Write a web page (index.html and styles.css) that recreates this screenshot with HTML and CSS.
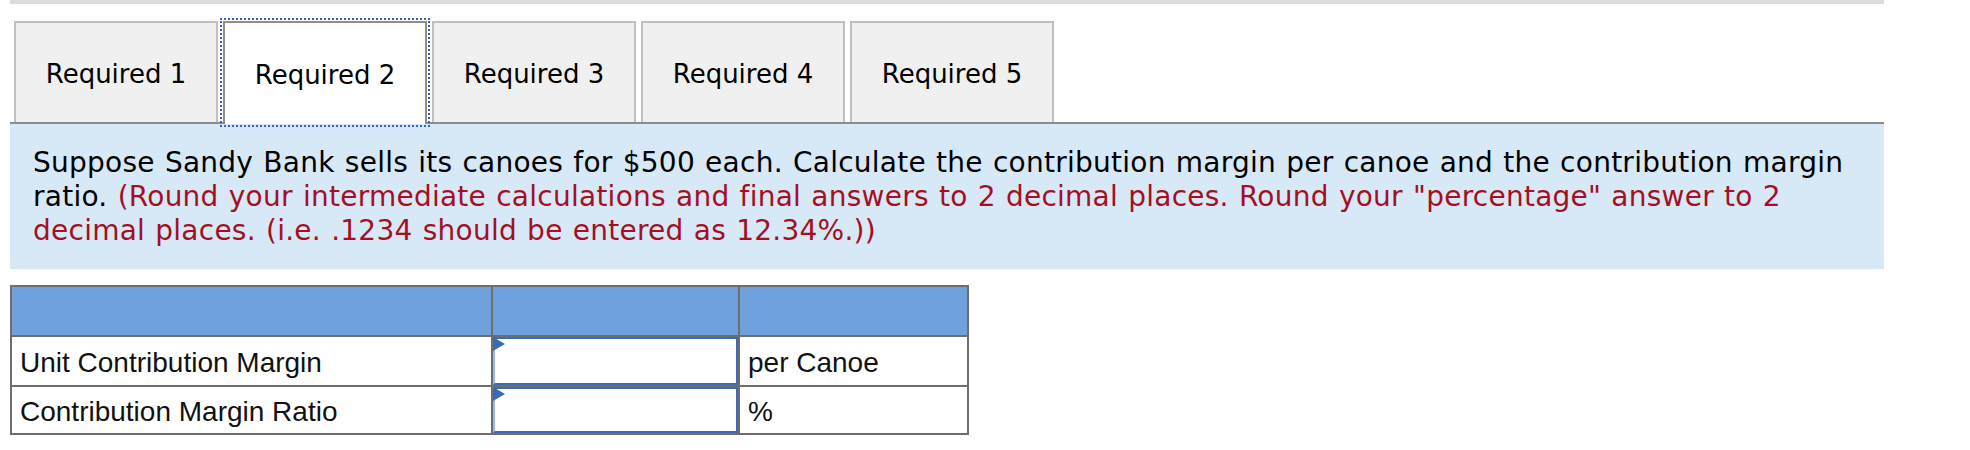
FILE: index.html
```html
<!DOCTYPE html>
<html>
<head>
<meta charset="utf-8">
<link rel="stylesheet" href="styles.css">
</head>
<body>
<div class="page">
  <div class="topbar"></div>
  <div class="tabs">
    <div class="tab">Required 1</div>
    <div class="tab active">Required 2</div>
    <div class="tab">Required 3</div>
    <div class="tab">Required 4</div>
    <div class="tab">Required 5</div>
  </div>
  <div class="question">
    Suppose Sandy Bank sells its canoes for $500 each. Calculate the contribution margin per canoe and the contribution margin ratio. <span class="hint">(Round your intermediate calculations and final answers to 2 decimal places. Round your "percentage" answer to 2 decimal places. (i.e. .1234 should be entered as 12.34%.))</span>
  </div>
  <table class="answer">
    <colgroup>
      <col class="c1">
      <col class="c2">
      <col class="c3">
    </colgroup>
    <tr class="head">
      <th></th><th></th><th></th>
    </tr>
    <tr class="row1">
      <td class="label">Unit Contribution Margin</td>
      <td class="entry"><div class="field"><input type="text"><span class="flag"></span></div></td>
      <td class="unit">per Canoe</td>
    </tr>
    <tr class="row2">
      <td class="label">Contribution Margin Ratio</td>
      <td class="entry"><div class="field"><input type="text"><span class="flag"></span></div></td>
      <td class="unit">%</td>
    </tr>
  </table>
</div>
</body>
</html>
```

FILE: styles.css
```css
html, body {
  margin: 0;
  padding: 0;
  background: #ffffff;
}

.page {
  width: 1874px;
  margin-left: 10px;
}

.topbar {
  height: 4px;
  background: #dcdcdc;
}

.tabs {
  display: flex;
  align-items: flex-start;
  gap: 5px;
  margin-top: 17px;
  padding-left: 4px;
  border-bottom: 2px solid #8c8c8c;
}

.tab {
  box-sizing: border-box;
  width: 204px;
  height: 101px;
  display: flex;
  align-items: center;
  justify-content: center;
  background: #f0f0f0;
  border: 2px solid #c0c0c0;
  border-bottom: none;
  font-family: "DejaVu Sans", Verdana, sans-serif;
  font-size: 26px;
  color: #000;
  padding-top: 2px;
}

.tab.active {
  position: relative;
  height: 103px;
  margin-bottom: -2px;
  background: #ffffff;
  border-color: #8c8c8c;
  outline: 2px dotted #3563c0;
  outline-offset: 1px;
}

.question {
  background: #d7e9f7;
  padding: 22px 24px 21px 23px;
  font-family: "DejaVu Sans", Verdana, sans-serif;
  font-size: 28px;
  line-height: 34px;
  word-spacing: 1px;
  letter-spacing: 0.25px;
  color: #000;
}

.hint {
  color: #a50f1f;
}

.answer {
  margin-top: 16px;
  border-collapse: collapse;
  table-layout: fixed;
  width: 957px;
  font-family: "Liberation Sans", Arial, sans-serif;
  font-size: 28px;
  color: #111;
}

.c1 { width: 481px; }
.c2 { width: 247px; }
.c3 { width: 229px; }

.answer th,
.answer td {
  border: 2px solid #6e6e6e;
  padding: 3px 8px 0;
  vertical-align: middle;
}

.head th {
  background: #6fa1dc;
  height: 48px;
  padding: 0;
}

.row1 td { height: 45px; }
.row2 td { height: 43px; }

.answer td.entry {
  padding: 0;
}

.field {
  position: relative;
  height: 100%;
}

.field input {
  display: block;
  box-sizing: border-box;
  width: 100%;
  height: 48px;
  margin: 0;
  border: 2px solid #3c6bb4;
  border-left-color: #9bb8e0;
  background: #ffffff;
  outline: none;
}

.row2 .field input {
  height: 46px;
}

.flag {
  position: absolute;
  top: 0;
  left: 0;
  width: 0;
  height: 0;
  border-top: 7px solid transparent;
  border-bottom: 7px solid transparent;
  border-left: 12px solid #3b69b3;
}
```
